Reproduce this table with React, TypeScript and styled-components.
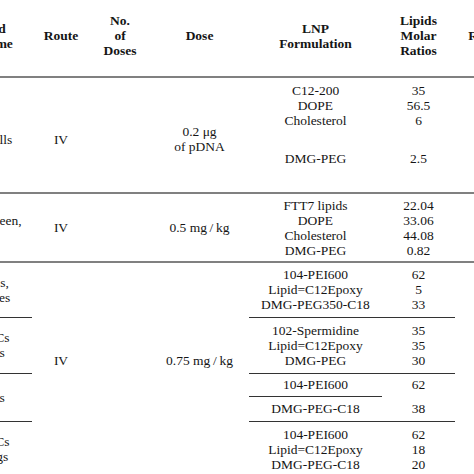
import React from "react";
import styled, { createGlobalStyle } from "styled-components";

const GlobalStyle = createGlobalStyle`
  html, body {
    margin: 0;
    padding: 0;
    background: #fff;
  }
  body {
    font-family: "Liberation Serif", "Times New Roman", serif;
    color: #151515;
  }
`;

const Viewport = styled.div`
  width: 474px;
  height: 474px;
  overflow: hidden;
  background: #fff;
`;

// the table is wider than the picture: its first column is cut at the left edge
const Table = styled.table`
  border-collapse: collapse;
  table-layout: fixed;
  width: 603px;
  margin-left: -98px;
  font-size: 13.5px;
  line-height: 15px;
`;

const Col = styled.col<{ $w: number }>`
  width: ${(p) => p.$w}px;
`;

const Row = styled.tr<{ $h: number }>`
  height: ${(p) => p.$h}px;
`;

const Head = styled.th<{ $shift?: number }>`
  font-weight: 700;
  text-align: center;
  vertical-align: middle;
  white-space: nowrap;
  padding: 0 0 ${(p) => p.$shift ?? 5}px;
  border-bottom: 2px solid #808080;
`;

type Line = "main" | "sub" | "none";

const Cell = styled.td<{
  $top?: number;
  $bottom?: number;
  $line?: Line;
  $valign?: "top" | "middle";
}>`
  text-align: center;
  white-space: nowrap;
  vertical-align: ${(p) => p.$valign ?? "middle"};
  padding: ${(p) => p.$top ?? 0}px 0 ${(p) => p.$bottom ?? 0}px;
  border-bottom: ${(p) =>
    p.$line === "main"
      ? "2px solid #808080"
      : p.$line === "sub"
      ? "1px solid #333"
      : "none"};
`;

const Gap = styled.div`
  margin-top: 23px;
`;

const Lines: React.FC<{ items: string[] }> = ({ items }) => (
  <>
    {items.map((t, i) => (
      <div key={i}>{t}</div>
    ))}
  </>
);

const widths = [130, 58, 60, 99, 133, 73, 50];

const App: React.FC = () => {
  return (
    <>
      <GlobalStyle />
      <Viewport>
        <Table>
          <colgroup>
            {widths.map((w, i) => (
              <Col key={i} $w={w} />
            ))}
          </colgroup>
          <thead>
            <Row $h={77}>
              <Head>
                <Lines items={["Cell Targeted", "Cell Type Name"]} />
              </Head>
              <Head>Route</Head>
              <Head>
                <Lines items={["No.", "of", "Doses"]} />
              </Head>
              <Head>Dose</Head>
              <Head>
                <Lines items={["LNP", "Formulation"]} />
              </Head>
              <Head>
                <Lines items={["Lipids", "Molar", "Ratios"]} />
              </Head>
              <Head>Ref.</Head>
            </Row>
          </thead>
          <tbody>
            <Row $h={116}>
              <Cell $line="main" $top={8}>
                Endothelial cells
              </Cell>
              <Cell $line="main" $top={8}>
                IV
              </Cell>
              <Cell $line="main" />
              <Cell $line="main" $top={8}>
                <Lines items={["0.2 μg", "of pDNA"]} />
              </Cell>
              <Cell $line="main" $valign="top" $top={5}>
                <Lines items={["C12-200", "DOPE", "Cholesterol"]} />
                <Gap>DMG-PEG</Gap>
              </Cell>
              <Cell $line="main" $valign="top" $top={5}>
                <Lines items={["35", "56.5", "6"]} />
                <Gap>2.5</Gap>
              </Cell>
              <Cell $line="main" />
            </Row>
            <Row $h={69}>
              <Cell $line="main">
                <Lines items={["Lungs, liver, spleen,", "heart"]} />
              </Cell>
              <Cell $line="main">IV</Cell>
              <Cell $line="main" />
              <Cell $line="main">0.5 mg{"\u2009/\u2009"}kg</Cell>
              <Cell $line="main">
                <Lines items={["FTT7 lipids", "DOPE", "Cholesterol", "DMG-PEG"]} />
              </Cell>
              <Cell $line="main">
                <Lines items={["22.04", "33.06", "44.08", "0.82"]} />
              </Cell>
              <Cell $line="main" />
            </Row>

            <Row $h={55}>
              <Cell $line="sub">
                <Lines items={["Epithelial cells,", "and hepatocytes"]} />
              </Cell>
              <Cell rowSpan={5} $bottom={20}>
                IV
              </Cell>
              <Cell rowSpan={5} />
              <Cell rowSpan={5} $bottom={20}>
                0.75 mg{"\u2009/\u2009"}kg
              </Cell>
              <Cell $line="sub">
                <Lines items={["104-PEI600", "Lipid=C12Epoxy", "DMG-PEG350-C18"]} />
              </Cell>
              <Cell $line="sub">
                <Lines items={["62", "5", "33"]} />
              </Cell>
              <Cell rowSpan={5} />
            </Row>
            <Row $h={56}>
              <Cell $line="sub">
                <Lines items={["Pulmonary ECs", "Alveolar cells"]} />
              </Cell>
              <Cell $line="sub">
                <Lines items={["102-Spermidine", "Lipid=C12Epoxy", "DMG-PEG"]} />
              </Cell>
              <Cell $line="sub">
                <Lines items={["35", "35", "30"]} />
              </Cell>
            </Row>
            <Row $h={23}>
              <Cell rowSpan={2} $line="sub">
                Alveolar cells
              </Cell>
              <Cell $line="sub">104-PEI600</Cell>
              <Cell>62</Cell>
            </Row>
            <Row $h={25}>
              <Cell $line="sub">DMG-PEG-C18</Cell>
              <Cell $line="sub">38</Cell>
            </Row>
            <Row $h={56}>
              <Cell>
                <Lines items={["Pulmonary ECs", "of mouse lungs"]} />
              </Cell>
              <Cell>
                <Lines items={["104-PEI600", "Lipid=C12Epoxy", "DMG-PEG-C18"]} />
              </Cell>
              <Cell>
                <Lines items={["62", "18", "20"]} />
              </Cell>
            </Row>
          </tbody>
        </Table>
      </Viewport>
    </>
  );
};

export default App;
